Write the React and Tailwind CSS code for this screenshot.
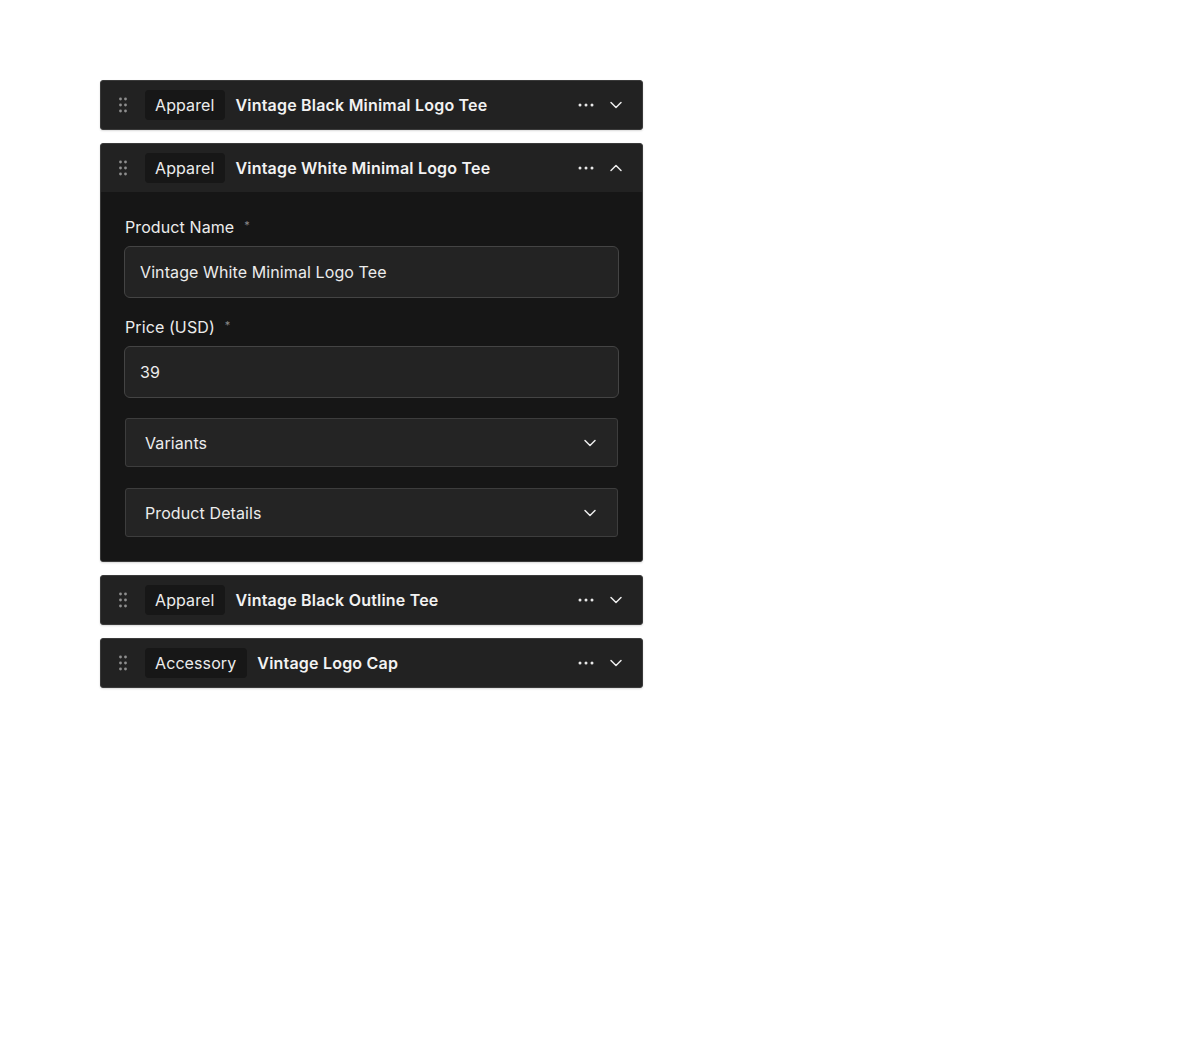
import React, { useState } from 'react';

const products = [
    { id: 1, category: 'Apparel', name: 'Vintage Black Minimal Logo Tee', price: '29' },
    { id: 2, category: 'Apparel', name: 'Vintage White Minimal Logo Tee', price: '39' },
    { id: 3, category: 'Apparel', name: 'Vintage Black Outline Tee', price: '35' },
    { id: 4, category: 'Accessory', name: 'Vintage Logo Cap', price: '25' },
];

function Grip() {
    return (
        <svg width="16" height="16" viewBox="0 0 16 16" className="text-[#8f8f8f]">
            {[2, 8, 14].map((y) =>
                [5.5, 10.5].map((x) => <circle key={`${x}-${y}`} cx={x} cy={y} r="1.4" fill="currentColor" />)
            )}
        </svg>
    );
}

function Dots() {
    return (
        <svg width="18" height="16" viewBox="0 0 18 16" className="text-[#e8e8e8]">
            <circle cx="3" cy="8" r="1.5" fill="currentColor" />
            <circle cx="9" cy="8" r="1.5" fill="currentColor" />
            <circle cx="15" cy="8" r="1.5" fill="currentColor" />
        </svg>
    );
}

function Chevron({ up }) {
    return (
        <svg width="16" height="16" viewBox="0 0 16 16" fill="none" className="text-[#ececec]">
            <path
                d={up ? 'M3 10.5 8 5.5l5 5' : 'M3 5.5 8 10.5l5-5'}
                stroke="currentColor"
                strokeWidth="1.5"
                strokeLinecap="round"
                strokeLinejoin="round"
            />
        </svg>
    );
}

function Field({ label, value }) {
    return (
        <div className="flex flex-col gap-[7px]">
            <label className="flex items-center text-[16px] leading-6 tracking-[0.1px] text-[#ececec]">
                {label}
                <span className="ml-2.5 text-[11px] text-[#8a8a8a] -translate-y-0.5">*</span>
            </label>
            <input
                defaultValue={value}
                className="-mx-px h-[52px] rounded-md border border-[#444444] bg-[#232323] px-[15px] text-[16px] tracking-[0.1px] text-[#ececec] outline-none"
            />
        </div>
    );
}

function Section({ title }) {
    return (
        <button className="flex h-[49px] w-full items-center justify-between rounded-[3px] border border-[#3d3d3d] bg-[#242424] pl-[19px] pr-[19px] text-left text-[16px] tracking-[0.1px] text-[#ececec]">
            {title}
            <Chevron />
        </button>
    );
}

function ProductCard({ product, open, onToggle }) {
    return (
        <div className="overflow-hidden rounded-[3px] border border-[#3a3a3a] bg-[#222222] shadow-[0_1px_2px_rgba(0,0,0,0.15)]">
            <div className="flex h-12 items-center pl-3.5 pr-[18px]">
                <Grip />
                <span className="ml-3.5 rounded-[4px] bg-[#171717] pl-2.5 pr-[11px] py-[3px] text-[16px] leading-6 tracking-[0.1px] text-[#ececec]">
                    {product.category}
                </span>
                <span className="ml-2.5 flex-1 text-[16px] font-semibold tracking-[0.2px] text-[#f2f2f2]">{product.name}</span>
                <button className="mr-[13px] flex items-center">
                    <Dots />
                </button>
                <button onClick={onToggle} className="flex items-center">
                    <Chevron up={open} />
                </button>
            </div>
            {open && (
                <div className="flex flex-col bg-[#161616] px-6 pt-[23px] pb-6">
                    <Field label="Product Name" value={product.name} />
                    <div className="mt-[17px]">
                        <Field label="Price (USD)" value={product.price} />
                    </div>
                    <div className="mt-5 flex flex-col gap-[21px]">
                        <Section title="Variants" />
                        <Section title="Product Details" />
                    </div>
                </div>
            )}
        </div>
    );
}

export default function App() {
    const [openId, setOpenId] = useState(2);

    return (
        <div className="min-h-screen bg-white px-[100px] pt-20 font-['Inter','Liberation_Sans',sans-serif]">
            <div className="flex w-[543px] flex-col gap-[13px]">
                {products.map((p) => (
                    <ProductCard
                        key={p.id}
                        product={p}
                        open={openId === p.id}
                        onToggle={() => setOpenId(openId === p.id ? null : p.id)}
                    />
                ))}
            </div>
        </div>
    );
}
